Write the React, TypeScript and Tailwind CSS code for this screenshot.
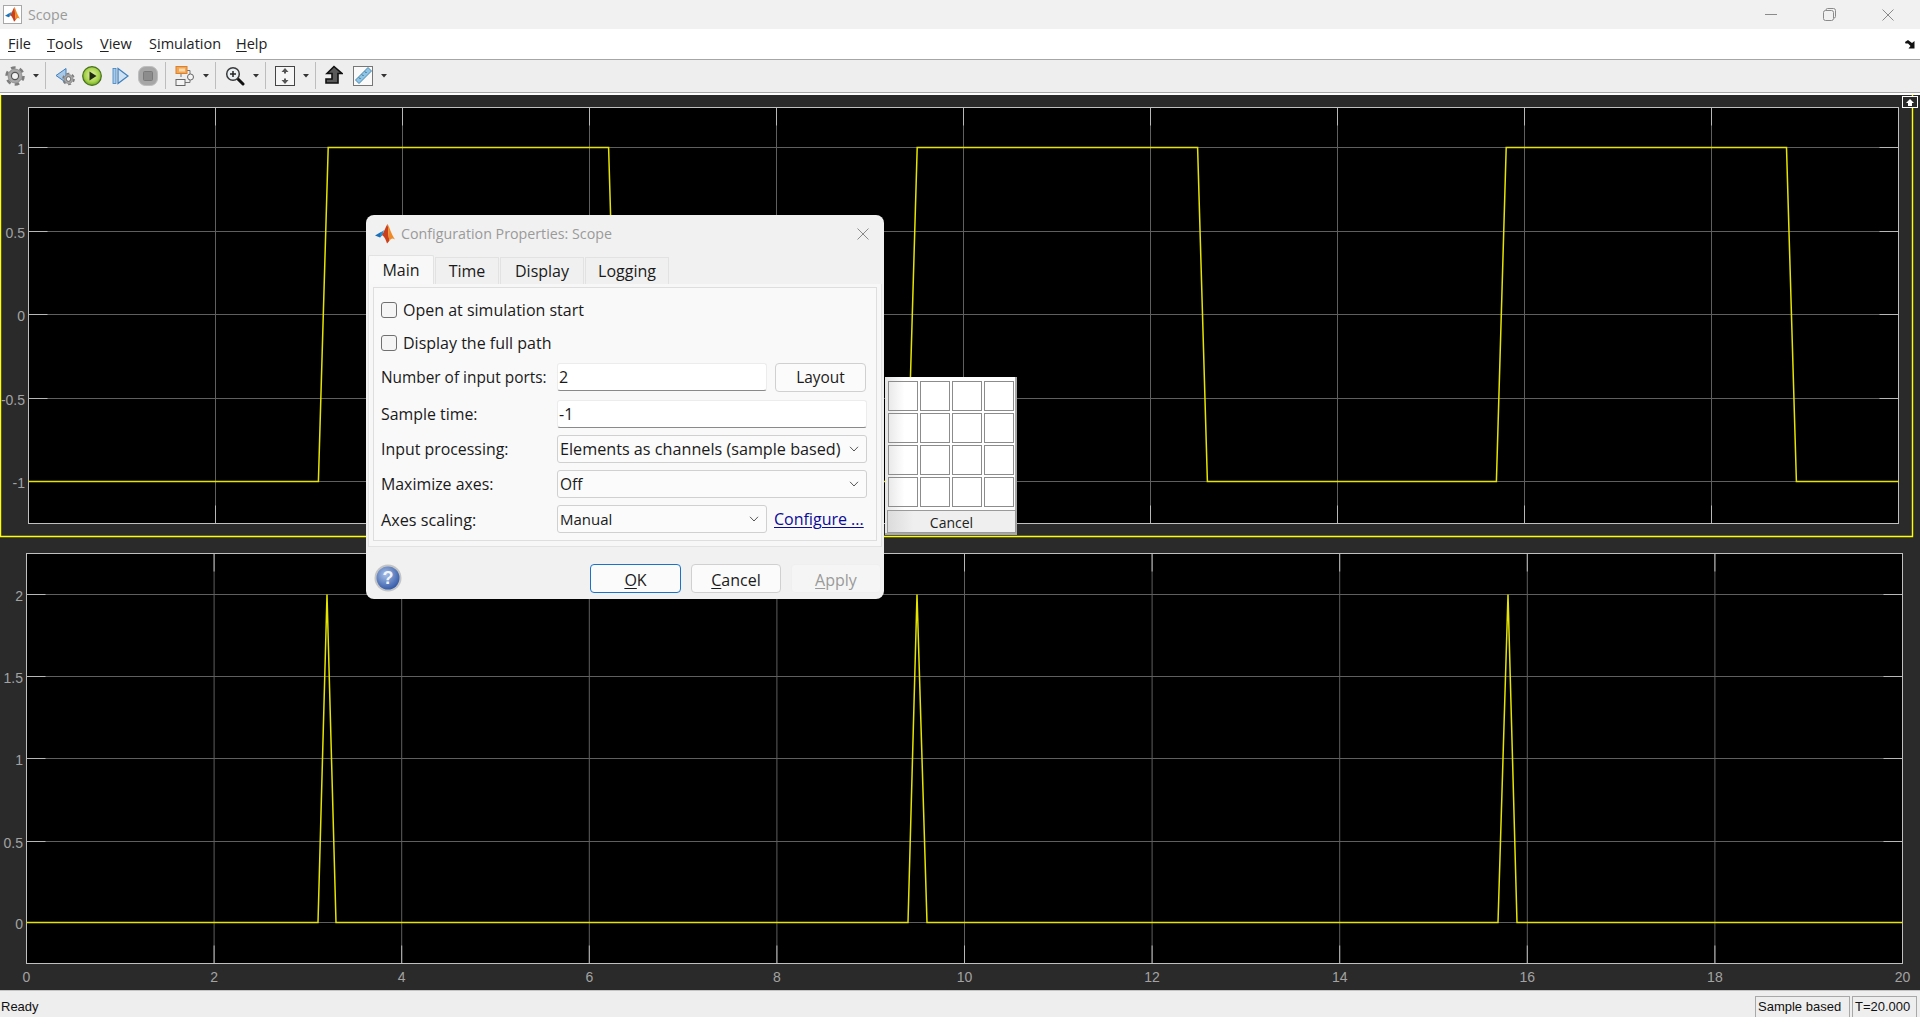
import type { ReactNode } from "react";

const SEGOE = "font-['Open_Sans','Noto_Sans',sans-serif]";

interface PlotProps {
	top: number;
	height: number;
	left: number;
	right: number;
	axTop: number;
	axBottom: number;
	yTicks: { label: string; y: number }[];
	xLabels?: string[];
	wave: string;
	selected?: boolean;
}

// page coordinates are used for the viewBox, easier to read off the screenshot
const Plot = ({ top, height, left, right, axTop, axBottom, yTicks, xLabels, wave, selected }: PlotProps) => {
	const xs = Array.from({ length: 11 }, (_, i) => left + ((right - left) * i) / 10);
	return (
		<svg width={1920} height={height} viewBox={`0 ${top} 1920 ${height}`} className="block shrink-0">
			<rect x={left} y={axTop} width={right - left} height={axBottom - axTop} fill="#000" />
			{xs.slice(1, 10).map((x) => (
				<g key={x}>
					<line x1={x} x2={x} y1={axTop} y2={axBottom} stroke="#5f5f5f" />
					<line x1={x} x2={x} y1={axTop} y2={axTop + 18} stroke="#b8b8b8" />
					<line x1={x} x2={x} y1={axBottom - 18} y2={axBottom} stroke="#b8b8b8" />
				</g>
			))}
			{yTicks.map((t) => (
				<g key={t.label}>
					<line x1={left} x2={right} y1={t.y} y2={t.y} stroke="#5f5f5f" />
					<line x1={left} x2={left + 19} y1={t.y} y2={t.y} stroke="#b8b8b8" />
					<line x1={right - 19} x2={right} y1={t.y} y2={t.y} stroke="#b8b8b8" />
					<text
						x={left - 3.5}
						y={t.y + 6.5}
						textAnchor="end"
						fill="#a3a3a3"
						fontSize={14}
						fontFamily="'Liberation Sans', sans-serif"
					>
						{t.label}
					</text>
				</g>
			))}
			<rect x={left} y={axTop} width={right - left} height={axBottom - axTop} fill="none" stroke="#c0c0c0" />
			<polyline points={wave} fill="none" stroke="#e4e400" strokeWidth={1.5} />
			{xLabels?.map((l, i) => (
				<text
					key={l}
					x={xs[i]}
					y={axBottom + 18}
					textAnchor="middle"
					fill="#a3a3a3"
					fontSize={14}
					fontFamily="'Liberation Sans', sans-serif"
				>
					{l}
				</text>
			))}
			{selected && (
				<>
					<polyline
						points={`0.5,${top} 0.5,${top + height - 1.5} 1912.5,${top + height - 1.5} 1912.5,${top}`}
						fill="none"
						stroke="#ffff00"
						strokeWidth={1.4}
					/>
					<rect x={1902.5} y={96.5} width={15} height={11} fill="#2a2a2a" stroke="#fff" />
					<path d="M1910 99 L1914 103 H1912 V106 H1908 V103 H1906 Z" fill="#fff" />
				</>
			)}
		</svg>
	);
};

const MatlabLogo = ({ size }: { size: number }) => (
	<svg width={size} height={size} viewBox="0 0 20 20" className="shrink-0">
		<path d="M0 11.5 L5.5 8.2 L8 9.8 L5 13.6 Z" fill="#1d6fb8" />
		<path d="M5.5 8.2 C7 7.5 8 7 9 6 L7.5 11 L5 13.6 Z" fill="#2a8fd0" />
		<path d="M12.5 0 C10.5 3 10 6 7 11 C9.5 12.5 11 16 12 19.5 C13 18.5 14 17.5 14.5 16.5 C13 11 13.5 4 12.5 0 Z" fill="#c8401c" />
		<path d="M12.5 0 C14.5 2.5 16 10 20 15.5 C17.5 14 16.5 14 14.5 16.8 C13 11 13.5 4 12.5 0 Z" fill="#f08a24" />
	</svg>
);

const Caret = () => (
	<svg width={6} height={4} viewBox="0 0 6 4" className="ml-[8px] shrink-0">
		<path d="M0 0 H6 L3 3.5 Z" fill="#333" />
	</svg>
);

const Sep = ({ ml = "ml-[6px]" }: { ml?: string }) => <div className={`${ml} h-[27px] w-px shrink-0 bg-[#bdbdbd]`} />;

const Ico = ({ w = 20, className, children }: { w?: number; className?: string; children: ReactNode }) => (
	<svg width={w} height={22} viewBox={`0 0 ${w} 22`} className={`shrink-0 ${className ?? ""}`}>
		{children}
	</svg>
);

const Gear = ({ cx, cy, r }: { cx: number; cy: number; r: number }) => (
	<g>
		<circle cx={cx} cy={cy} r={r} fill="none" stroke="#7d7d7d" strokeWidth={r * 0.3} strokeDasharray={`${r * 0.55} ${r * 0.5}`} />
		<circle cx={cx} cy={cy} r={r * 0.82} fill="#a8a8a8" stroke="#777" strokeWidth={0.6} />
		<circle cx={cx} cy={cy} r={r * 0.42} fill="#f2f2f2" stroke="#555" strokeWidth={r * 0.14} />
	</g>
);

const Toolbar = () => (
	<div className="flex h-[33px] items-center border-b border-[#a6a6a6] bg-[#eeeeee] pb-[1px] pl-[5px]">
		<Ico>
			<Gear cx={10} cy={11} r={8.5} />
		</Ico>
		<Caret />
		<Sep />
		{/* step back */}
		<Ico className="ml-[9px]">
			<path d="M1 10.5 L11 3.5 V17.5 Z" fill="#a8c8e6" stroke="#3f7fbd" strokeWidth={1} />
			<Gear cx={13.5} cy={14} r={5.5} />
		</Ico>
		{/* run */}
		<Ico className="ml-[7px]">
			<defs>
				<radialGradient id="runG" cx="50%" cy="45%" r="55%">
					<stop offset="0%" stopColor="#e9f5b0" />
					<stop offset="70%" stopColor="#a6d24a" />
					<stop offset="100%" stopColor="#6aa622" />
				</radialGradient>
			</defs>
			<circle cx={10} cy={11} r={9.3} fill="url(#runG)" stroke="#48701c" strokeWidth={1.2} />
			<path d="M7.5 6.5 L14.5 11 L7.5 15.5 Z" fill="#1f2a10" />
		</Ico>
		{/* step forward */}
		<Ico w={17} className="ml-[10px]">
			<rect x={1} y={3.5} width={3} height={15} fill="#a9cbea" stroke="#3f7fbd" strokeWidth={0.8} />
			<path d="M6 3.5 L16 11 L6 18.5 Z" fill="#cfe2f4" stroke="#3f7fbd" strokeWidth={1.2} />
		</Ico>
		{/* stop */}
		<Ico className="ml-[9px]">
			<rect x={0.5} y={1.5} width={19} height={19} rx={7} fill="#a6a6a6" stroke="#bdbdbd" />
			<rect x={5.5} y={6.5} width={9} height={9} rx={1} fill="#8c8c8c" stroke="#7a7a7a" />
		</Ico>
		<Sep ml="ml-[7px]" />
		{/* library browser */}
		<Ico className="ml-[9px]">
			<path d="M12 5.5 H15 V11 H16 M6 9 V12 M10 17.5 H15 V14" fill="none" stroke="#777" />
			<rect x={1} y={1.5} width={11} height={7} fill="#f2a65a" stroke="#d9822b" />
			<rect x={4} y={3.5} width={6} height={3} fill="#f9d9a8" />
			<rect x={1} y={14.5} width={9} height={6} fill="#f4f4f4" stroke="#666" />
			<circle cx={15.5} cy={12} r={3} fill="#f4f4f4" stroke="#666" />
		</Ico>
		<Caret />
		<Sep />
		{/* zoom */}
		<Ico className="ml-[9px]">
			<path d="M12 13 L18 19" stroke="#111" strokeWidth={3} strokeLinecap="round" />
			<circle cx={8} cy={9} r={6.3} fill="#e8f0f4" stroke="#3a3a3a" strokeWidth={1.5} />
			<path d="M5 9 H11 M8 6 V12" stroke="#222" strokeWidth={1.5} />
		</Ico>
		<Caret />
		<Sep />
		{/* scale axes */}
		<Ico className="ml-[9px]">
			<rect x={0.5} y={1.5} width={19} height={19} fill="#f6f6f6" stroke="#444" />
			<path d="M10 3 L13.5 7 H11 V8.5 H9 V7 H6.5 Z M10 19 L13.5 15 H11 V13.5 H9 V15 H6.5 Z" fill="#555" />
		</Ico>
		<Caret />
		<Sep />
		{/* trigger */}
		<Ico w={18} className="ml-[9px]">
			<path d="M9 1.5 L17 8.5 H13 V18 H1 V14 H7 V8.5 H2 Z" fill="#5a5a5a" stroke="#111" strokeWidth={1.6} />
		</Ico>
		{/* measurements */}
		<Ico className="ml-[10px]">
			<rect x={0.5} y={1.5} width={19} height={19} fill="#fafafa" stroke="#777" />
			<path d="M2.5 15 L15 2.5 L18.5 6 L6 18.5 Z" fill="#8ec4e6" stroke="#4d88ad" />
			<path d="M6 12.5 L7.5 14 M9 9.5 L10.5 11 M12 6.5 L13.5 8" stroke="#2d5c7a" />
		</Ico>
		<Caret />
	</div>
);

const MenuItem = ({ pre, key1, post, w }: { pre?: string; key1: string; post: string; w: string }) => (
	<span className={`${w} shrink-0`}>
		{pre}
		<span className="underline underline-offset-2">{key1}</span>
		{post}
	</span>
);

const Checkbox = ({ label }: { label: string }) => (
	<div className="flex h-[28px] items-center gap-[6px]">
		<input
			type="checkbox"
			readOnly
			className="h-[16px] w-[16px] appearance-none rounded-[3px] border border-[#707070] bg-[#f5f5f5]"
		/>
		<span className="-mt-[1px]">{label}</span>
	</div>
);

const Chevron = () => (
	<svg width={10} height={6} viewBox="0 0 10 6" className="shrink-0">
		<path d="M1 0.8 L5 5 L9 0.8" fill="none" stroke="#555" />
	</svg>
);

const Select = ({ value, w, size }: { value: string; w: string; size: string }) => (
	<div className={`${w} flex h-[28px] shrink-0 items-center justify-between rounded-[3px] border border-[#d0d0d0] bg-[#fbfbfb] pl-[2px] pr-[7px]`}>
		<span className={size}>{value}</span>
		<Chevron />
	</div>
);

const TextBox = ({ value, w }: { value: string; w: string }) => (
	<input
		readOnly
		value={value}
		className={`${w} h-[28px] shrink-0 rounded-[3px] border border-[#ececec] border-b-[#8a8a8a] bg-white px-[1px] text-[16px] outline-none`}
	/>
);

const Row = ({ label, children, mt, size = "text-[15.9px]" }: { label: string; children: ReactNode; mt: string; size?: string }) => (
	<div className={`${mt} flex h-[28px] items-center`}>
		<span className={`w-[176px] shrink-0 pt-[2px] ${size}`}>{label}</span>
		{children}
	</div>
);

const Tab = ({ label, w, active }: { label: string; w: string; active?: boolean }) => (
	<div
		className={`${w} flex items-center justify-center border border-b-0 border-[#e2e2e2] ${
			active ? "h-[29px] rounded-t-[2px] bg-[#f8f8f8]" : "ml-px h-[27px] bg-[#f0f0f0]"
		}`}
	>
		{label}
	</div>
);

const DlgButton = ({ k, rest, className }: { k: string; rest: string; className: string }) => (
	<div className={`flex h-[29px] w-[90px] items-center justify-center rounded-[4px] border pt-[2px] ${className}`}>
		<span>
			<span className="underline underline-offset-2">{k}</span>
			{rest}
		</span>
	</div>
);

const HelpIcon = () => (
	<svg width={28} height={28} viewBox="0 0 28 28" className="shrink-0">
		<defs>
			<radialGradient id="helpG" cx="40%" cy="35%" r="70%">
				<stop offset="0%" stopColor="#a9c0e6" />
				<stop offset="100%" stopColor="#2f56a6" />
			</radialGradient>
		</defs>
		<circle cx={14} cy={14} r={13.5} fill="#c4c4c4" />
		<circle cx={14} cy={14} r={11.5} fill="url(#helpG)" />
		<text x={14} y={20} textAnchor="middle" fontSize={18} fontWeight={700} fill="#f2f5fb" fontFamily="'Liberation Sans', sans-serif">
			?
		</text>
	</svg>
);

const ConfigDialog = () => (
	<div className={`${SEGOE} absolute left-[366px] top-[215px] flex h-[384px] w-[518px] flex-col overflow-hidden rounded-[8px] bg-[#f1f1f1] text-[16px] text-[#1a1a1a]`}>
		<div className="flex h-[40px] shrink-0 items-center pb-[3px] pl-[9px] pr-[15px]">
			<MatlabLogo size={20} />
			<span className="ml-[6px] text-[14.25px] text-[#9a9a9a]">Configuration Properties: Scope</span>
			<svg width={12} height={12} viewBox="0 0 12 12" className="ml-auto">
				<path d="M0.5 0.5 L11.5 11.5 M11.5 0.5 L0.5 11.5" stroke="#8a8a8a" />
			</svg>
		</div>
		<div className="flex h-[29px] shrink-0 items-end pl-[2px]">
			<Tab label="Main" w="w-[66px]" active />
			<Tab label="Time" w="w-[64px]" />
			<Tab label="Display" w="w-[84px]" />
			<Tab label="Logging" w="w-[84px]" />
		</div>
		<div className="mx-[2px] h-[263px] shrink-0 border border-t-0 border-[#e2e2e2] bg-[#f7f7f7] px-[4px] pb-[5px] pt-[3px]">
			<div className="h-full border border-[#dedede] bg-[#f9f9f9] pl-[7px] pt-[8px]">
				<Checkbox label="Open at simulation start" />
				<div className="mt-[5px]">
					<Checkbox label="Display the full path" />
				</div>
				<Row label="Number of input ports:" mt="mt-[6px]" size="text-[15.4px]">
					<TextBox value="2" w="w-[210px]" />
					<div className="ml-[8px] flex h-[29px] w-[91px] items-center justify-center rounded-[4px] border border-[#d0d0d0] bg-[#fbfbfb] pt-[2px] text-[15.4px]">Layout</div>
				</Row>
				<Row label="Sample time:" mt="mt-[9px]">
					<TextBox value="-1" w="w-[310px]" />
				</Row>
				<Row label="Input processing:" mt="mt-[7px]">
					<Select value="Elements as channels (sample based)" w="w-[310px]" size="pt-[1px] text-[16.2px]" />
				</Row>
				<Row label="Maximize axes:" mt="mt-[7px]">
					<Select value="Off" w="w-[310px]" size="pt-[1px] text-[15.5px]" />
				</Row>
				<Row label="Axes scaling:" mt="mt-[7px]" size="text-[16.2px]">
					<Select value="Manual" w="w-[210px]" size="pt-[1px] text-[15px]" />
					<span className="ml-[7px] text-[#0b0b9a] underline underline-offset-2">Configure ...</span>
				</Row>
			</div>
		</div>
		<div className="flex flex-1 items-start pl-[8px] pr-[3px] pt-[17px]">
			<HelpIcon />
			<div className="ml-auto flex gap-[10px]">
				<DlgButton k="O" rest="K" className="w-[91px] border-[#1a73c8] bg-[#fbfbfb]" />
				<DlgButton k="C" rest="ancel" className="border-[#d0d0d0] bg-[#fbfbfb]" />
				<DlgButton k="A" rest="pply" className="border-[#efefef] bg-[#f5f5f5] text-[#9a9a9a]" />
			</div>
		</div>
	</div>
);

const LayoutPicker = () => (
	<div className={`${SEGOE} absolute left-[885px] top-[377px] flex h-[158px] w-[132px] flex-col border-2 border-t-0 border-l-0 border-[#a8a8a8] bg-gradient-to-r from-[#e4e4e4] via-white via-[15%] to-white pl-[3px] pt-[4px]`}>
		<div className="grid grid-cols-[repeat(4,30px)] grid-rows-[repeat(4,30px)] gap-[2px]">
			{Array.from({ length: 16 }, (_, i) => (
				<div key={i} className="border border-[#8c8c8c]" />
			))}
		</div>
		<div className="-ml-[1px] mt-[3px] flex h-[23px] w-[129px] items-center justify-center border border-[#9a9a9a] bg-gradient-to-r from-[#dcdcdc] via-[#efefef] via-[20%] to-[#efefef] pt-[1px] text-[14px] text-[#222]">
			Cancel
		</div>
	</div>
);

const squareWave =
	"28.5,481.5 318.4,481.5 328.2,147.5 608.6,147.5 618.4,481.5 907.4,481.5 917.2,147.5 1197.6,147.5 1207.4,481.5 1496.4,481.5 1506.2,147.5 1786.5,147.5 1796.4,481.5 1898.5,481.5";
const pulseWave =
	"26.5,922.5 318,922.5 327,594.5 336,922.5 908,922.5 917,594.5 927,922.5 1498,922.5 1508,594.5 1517,922.5 1902.5,922.5";

const App = () => (
	<div className="flex h-[1017px] w-[1920px] flex-col overflow-hidden bg-[#2a2a2a]">
		<div className={`${SEGOE} flex h-[29px] shrink-0 items-center bg-[#f1f1f1] pl-[3px] text-[14.2px] text-[#9a9a9a]`}>
			<div className="flex h-[19px] w-[19px] items-center justify-center border border-[#a8a8a8] bg-white">
				<MatlabLogo size={15} />
			</div>
			<span className="ml-[6px]">Scope</span>
			<div className="ml-auto flex items-center">
				<div className="h-px w-[12px] bg-[#8a8a8a]" />
				<svg width={13} height={13} viewBox="0 0 13 13" className="ml-[46px]">
					<rect x={0.5} y={2.5} width={10} height={10} rx={2} fill="none" stroke="#8a8a8a" />
					<path d="M3 2.5 V2 A1.5 1.5 0 0 1 4.5 0.5 H10.5 A2 2 0 0 1 12.5 2.5 V8.5 A1.5 1.5 0 0 1 11 10" fill="none" stroke="#8a8a8a" />
				</svg>
				<svg width={12} height={12} viewBox="0 0 12 12" className="ml-[46px] mr-[26px]">
					<path d="M0.5 0.5 L11.5 11.5 M11.5 0.5 L0.5 11.5" stroke="#8a8a8a" />
				</svg>
			</div>
		</div>
		<div className={`${SEGOE} flex h-[31px] shrink-0 items-center border-b border-[#a6a6a6] bg-white pl-[8px] text-[14.5px] text-[#222]`}>
			<MenuItem key1="F" post="ile" w="w-[39px]" />
			<MenuItem key1="T" post="ools" w="w-[53px]" />
			<MenuItem key1="V" post="iew" w="w-[49px]" />
			<MenuItem pre="S" key1="i" post="mulation" w="w-[87px]" />
			<MenuItem key1="H" post="elp" w="w-[40px]" />
			<svg width={11} height={9} viewBox="0 0 11 9" className="ml-auto mr-[4px]">
				<path d="M0 2 L3 0 L7 3 L9.5 1 V8.5 H3.5 L5.5 6 L3 3.5 L0.5 3.5 Z" fill="#111" />
			</svg>
		</div>
		<Toolbar />
		<div className="h-[2px] shrink-0 bg-white" />
		<div className="relative flex-1">
			<Plot
				selected
				top={95}
				height={443}
				left={28.5}
				right={1898.5}
				axTop={107.5}
				axBottom={523.5}
				yTicks={[
					{ label: "1", y: 147.5 },
					{ label: "0.5", y: 231.5 },
					{ label: "0", y: 314.5 },
					{ label: "-0.5", y: 398.5 },
					{ label: "-1", y: 481.5 },
				]}
				wave={squareWave}
			/>
			<Plot
				top={538}
				height={452}
				left={26.5}
				right={1902.5}
				axTop={553.5}
				axBottom={963.5}
				yTicks={[
					{ label: "2", y: 594.5 },
					{ label: "1.5", y: 676.5 },
					{ label: "1", y: 758.5 },
					{ label: "0.5", y: 841.5 },
					{ label: "0", y: 922.5 },
				]}
				xLabels={["0", "2", "4", "6", "8", "10", "12", "14", "16", "18", "20"]}
				wave={pulseWave}
			/>
		</div>
		<div className="flex h-[27px] shrink-0 items-end justify-between border-t border-[#c4c4c4] bg-[#eeeeee] pl-[1px] pr-[3px] font-['Liberation_Sans',sans-serif] text-[13px] text-[#111]">
			<span className="mb-[1px]">Ready</span>
			<div className="flex gap-[2px]">
				<div className="flex h-[21px] w-[95px] items-center border border-b-0 border-[#a8a8a8] pl-[2px]">Sample based</div>
				<div className="flex h-[21px] w-[65px] items-center border border-b-0 border-[#a8a8a8] pl-[2px]">T=20.000</div>
			</div>
		</div>
		<ConfigDialog />
		<LayoutPicker />
	</div>
);

export default App;
